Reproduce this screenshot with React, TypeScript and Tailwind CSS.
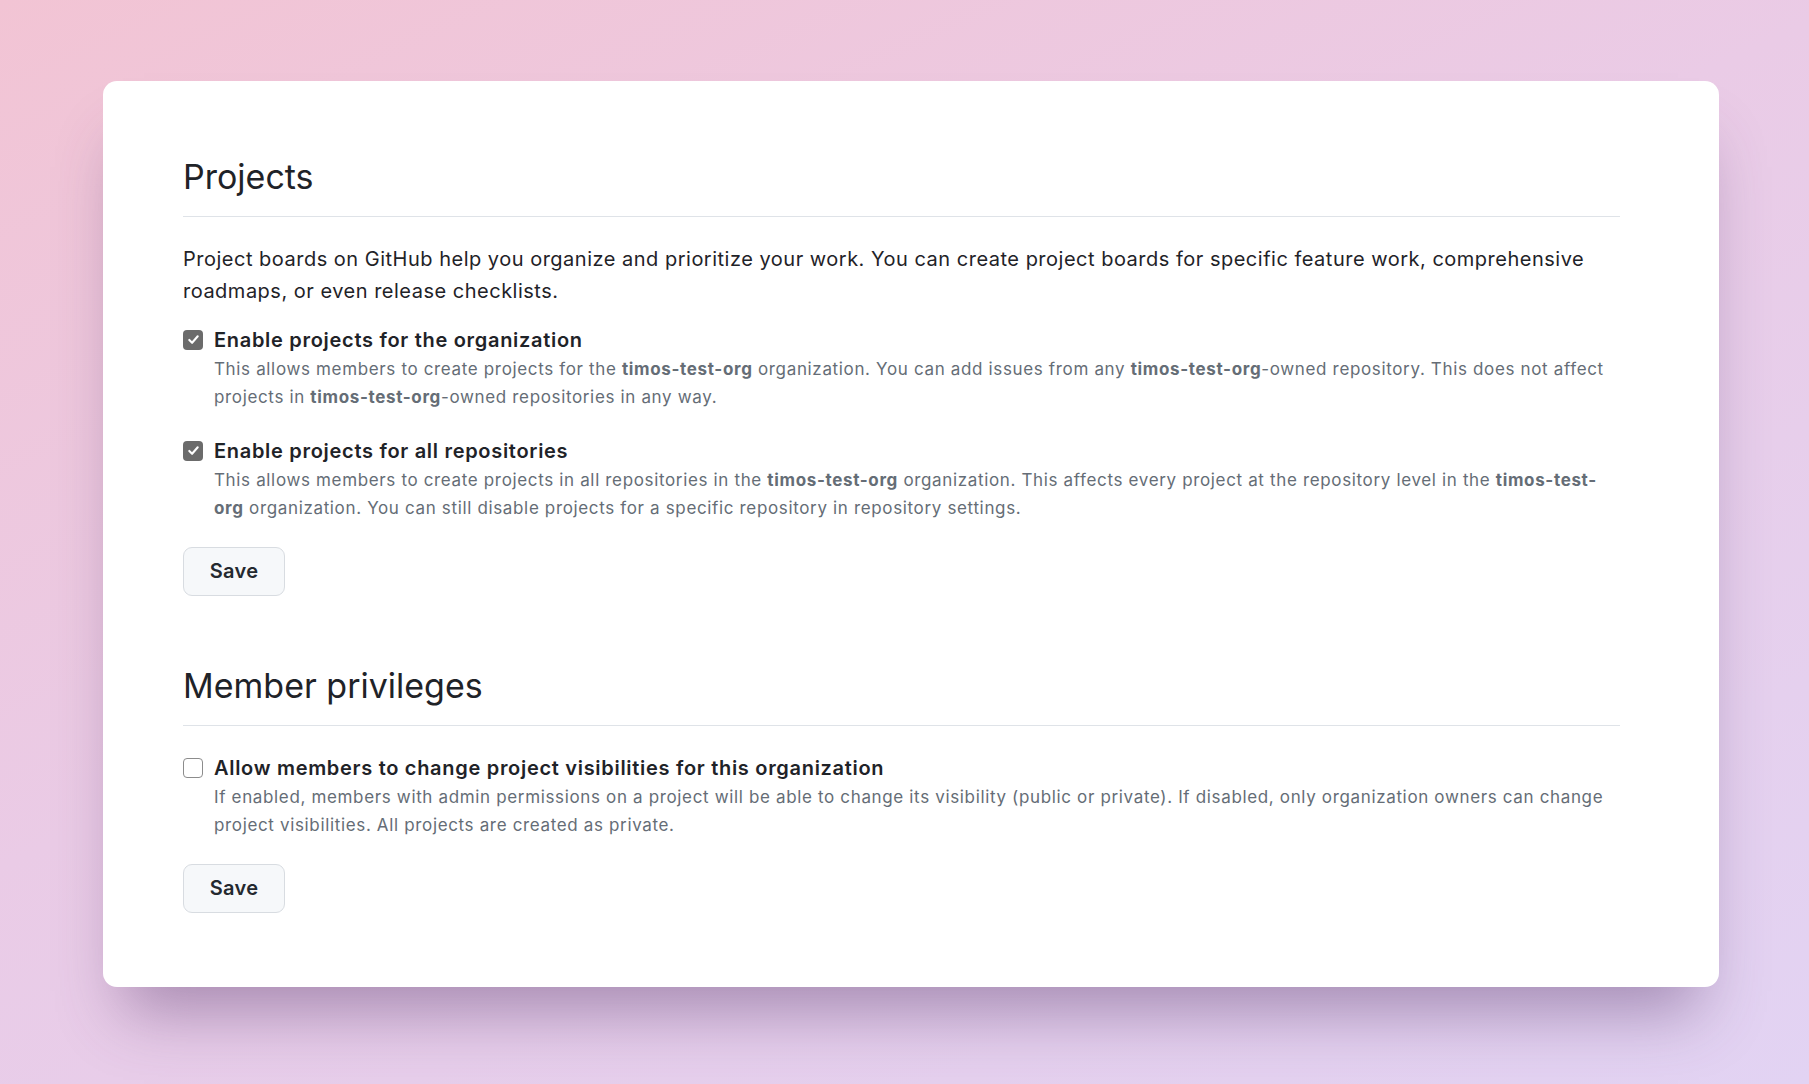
import React from 'react';

const ORG = 'timos-test-org';

const Checkbox: React.FC<{ checked: boolean }> = ({ checked }) =>
  checked ? (
    <span className="mt-[4px] flex h-[20px] w-[20px] shrink-0 items-center justify-center rounded-[4px] bg-[#6b6b6b]">
      <svg viewBox="0 0 16 16" className="h-[15px] w-[15px]" fill="none">
        <path d="M3.5 8.5l3 3 6-7" stroke="#fff" strokeWidth="2.2" strokeLinecap="round" strokeLinejoin="round" />
      </svg>
    </span>
  ) : (
    <span className="mt-[4px] h-[20px] w-[20px] shrink-0 rounded-[4px] border-[1.5px] border-[#8c8c8c] bg-white" />
  );

const Option: React.FC<{ checked: boolean; label: string; children: React.ReactNode }> = ({ checked, label, children }) => (
  <div className="flex gap-[11px]">
    <Checkbox checked={checked} />
    <div className="flex flex-col">
      <span className="text-[20px] font-semibold leading-[29px] tracking-[0.7px] text-[#1f2328]">{label}</span>
      <p className="text-[17px] leading-[28px] tracking-[0.65px] text-[#656d76]">{children}</p>
    </div>
  </div>
);

const SaveButton = () => (
  <button className="h-[49px] w-[102px] rounded-[9px] border-[1.5px] border-[#d8dce1] bg-[#f6f8fa] text-[20px] font-semibold tracking-[0.3px] text-[#24292f]">
    Save
  </button>
);

const Subhead: React.FC<{ title: string }> = ({ title }) => (
  <h2 className="border-b-[1.5px] border-[#dfe3e8] pb-[18px] text-[34px] font-normal leading-[42px] text-[#1f2328]">
    {title}
  </h2>
);

export default function App() {
  return (
    <div
      className="min-h-screen w-full bg-[linear-gradient(155deg,#f2c4d4_0%,#eacbe6_45%,#e2d3f3_100%)] pl-[103px] pt-[81px] pb-[96px]"
      style={{ fontFamily: 'Inter, "Noto Sans", sans-serif' }}
    >
      <div className="w-[1616px] rounded-[14px] bg-white pl-[80px] pr-[99px] pt-[75px] pb-[74px] shadow-[0_45px_60px_-20px_rgba(90,60,110,0.45)]">
        {/* Projects */}
        <Subhead title="Projects" />
        <p className="mt-[26px] text-[20px] leading-[32.3px] tracking-[0.5px] text-[#1f2328]">
          Project boards on GitHub help you organize and prioritize your work. You can create project boards for specific feature work, comprehensive roadmaps, or even release checklists.
        </p>

        <div className="mt-[18px] flex flex-col gap-[26px]">
          <Option checked label="Enable projects for the organization">
            This allows members to create projects for the <b>{ORG}</b> organization. You can add issues from any <b>{ORG}</b>-owned repository. This does not affect projects in <b>{ORG}</b>-owned repositories in any way.
          </Option>
          <Option checked label="Enable projects for all repositories">
            This allows members to create projects in all repositories in the <b>{ORG}</b> organization. This affects every project at the repository level in the <b>{ORG}</b> organization. You can still disable projects for a specific repository in repository settings.
          </Option>
        </div>

        <div className="mt-[25px]">
          <SaveButton />
        </div>

        {/* Member privileges */}
        <div className="mt-[69px]">
          <Subhead title="Member privileges" />
        </div>

        <div className="mt-[28px]">
          <Option checked={false} label="Allow members to change project visibilities for this organization">
            If enabled, members with admin permissions on a project will be able to change its visibility (public or private). If disabled, only organization owners can change project visibilities. All projects are created as private.
          </Option>
        </div>

        <div className="mt-[25px]">
          <SaveButton />
        </div>
      </div>
    </div>
  );
}
